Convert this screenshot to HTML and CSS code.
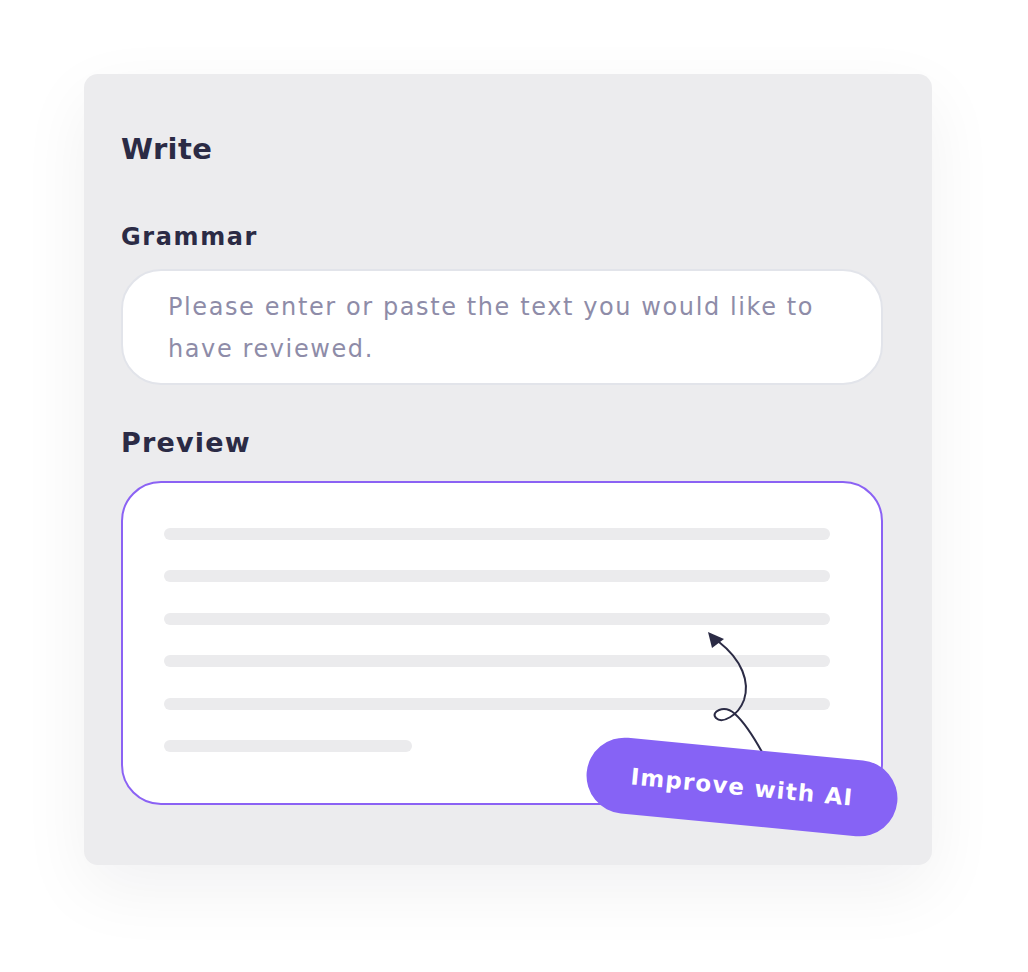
FILE: index.html
```html
<!DOCTYPE html>
<html>
<head>
<meta charset="utf-8">
<link rel="stylesheet" href="styles.css">
</head>
<body>
<div class="card">
  <h1 class="title write">Write</h1>
  <h2 class="label">Grammar</h2>
  <div class="input">Please enter or paste the text you would like to have reviewed.</div>
  <h1 class="title preview-title">Preview</h1>
  <div class="preview-wrap">
    <div class="preview">
      <div class="line"></div>
      <div class="line"></div>
      <div class="line"></div>
      <div class="line"></div>
      <div class="line"></div>
      <div class="line short"></div>
    </div>
    <svg class="arrow" width="800" height="400" viewBox="121 481 800 400">
      <path d="M762 752 C752 734 744 722 735 714 C724 704 710 712 716 718 C722 724 738 716 744 700 C750 682 742 660 719 642" fill="none" stroke="#2b2b45" stroke-width="2" stroke-linecap="round"/>
      <polygon points="708,632 724,639 712,648" fill="#2b2b45"/>
    </svg>
    <div class="badge">Improve with AI</div>
  </div>
</div>
</body>
</html>
```

FILE: styles.css
```css
html, body {
  margin: 0;
  padding: 0;
  background: #ffffff;
}
body {
  font-family: "DejaVu Sans", "Noto Sans", sans-serif;
  width: 1028px;
  height: 972px;
  overflow: hidden;
}
.card {
  margin: 74px 0 0 84px;
  width: 848px;
  height: 791px;
  box-sizing: border-box;
  padding: 55px 49px 0 37px;
  background: #ececee;
  border-radius: 14px;
  box-shadow: 0 24px 70px rgba(20, 20, 40, 0.06);
}
.title {
  margin: 0;
  font-size: 27px;
  line-height: 40px;
  font-weight: 700;
  color: #2b2b45;
  letter-spacing: 1.2px;
}
.title.write {
  font-size: 29px;
  letter-spacing: 0.4px;
}
.label {
  margin: 51px 0 0 0;
  font-size: 24px;
  line-height: 34px;
  font-weight: 700;
  color: #2b2b45;
  letter-spacing: 1.6px;
}
.input {
  margin-top: 15px;
  height: 116px;
  box-sizing: border-box;
  border: 2px solid #e2e4ea;
  border-radius: 40px;
  background: #ffffff;
  padding: 15px 20px 0 45px;
  font-size: 24px;
  line-height: 42px;
  color: #8e8ca8;
  letter-spacing: 1.6px;
}
.preview-title {
  margin-top: 38px;
}
.preview-wrap {
  position: relative;
  margin-top: 18px;
}
.preview {
  height: 324px;
  box-sizing: border-box;
  border: 2px solid #8b62f4;
  border-radius: 40px;
  background: #ffffff;
  padding: 45px 51px 0 41px;
  display: flex;
  flex-direction: column;
  gap: 30.4px;
}
.line {
  height: 12px;
  border-radius: 6px;
  background: #ebebed;
}
.line.short {
  width: 248px;
}
.arrow {
  position: absolute;
  left: 0;
  top: 0;
}
.badge {
  position: absolute;
  left: 465px;
  top: 268px;
  width: 312px;
  height: 76px;
  border-radius: 38px;
  background: #8663f5;
  color: #ffffff;
  font-size: 23px;
  font-weight: 700;
  line-height: 76px;
  letter-spacing: 1.2px;
  text-align: center;
  transform: rotate(5.5deg);
}
```
